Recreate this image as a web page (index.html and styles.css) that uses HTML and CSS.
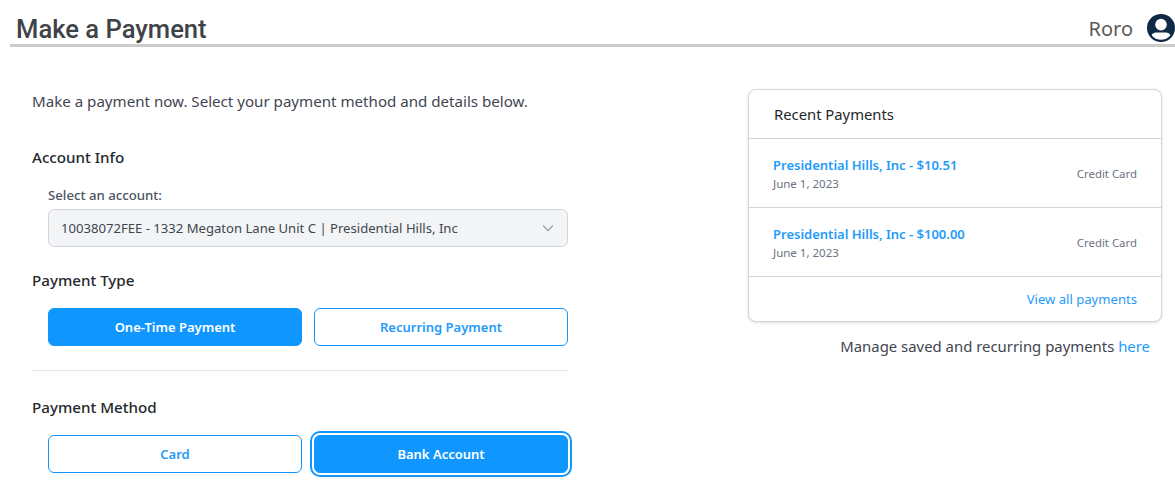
FILE: index.html
```html
<!DOCTYPE html>
<html lang="en">
<head>
<meta charset="utf-8">
<title>Make a Payment</title>
<link rel="stylesheet" href="styles.css">
</head>
<body>
<header class="topbar">
  <h1 class="title">Make a Payment</h1>
  <div class="user">
    <span class="user-name">Roro</span>
    <svg class="avatar" viewBox="0 0 28 28" aria-hidden="true">
      <circle cx="14" cy="14" r="14" fill="#0f2a47"/>
      <circle cx="14" cy="10.600" r="5.800" fill="#fff"/>
      <path d="M4.600 21.200C6 18 9.800 18.600 14 18.600s8-.6 9.400 2.600C21 24.200 17.800 25.800 14 25.800S7 24.200 4.600 21.200Z" fill="#fff"/>
    </svg>
  </div>
</header>
<main class="layout">
  <section class="form">
    <p class="intro">Make a payment now. Select your payment method and details below.</p>
    <h2 class="section-title first">Account Info</h2>
    <div class="indent">
      <label class="field-label">Select an account:</label>
      <div class="select">
        <span>10038072FEE - 1332 Megaton Lane Unit C | Presidential Hills, Inc</span>
        <svg class="chevron" viewBox="0 0 12 8" aria-hidden="true"><path d="M1 1.500l5 5 5-5" fill="none" stroke="#9ca3af" stroke-width="1.300"/></svg>
      </div>
    </div>
    <h2 class="section-title type">Payment Type</h2>
    <div class="indent buttons">
      <button class="btn solid">One-Time Payment</button>
      <button class="btn outline">Recurring Payment</button>
    </div>
    <hr class="divider">
    <h2 class="section-title method">Payment Method</h2>
    <div class="indent buttons">
      <button class="btn outline">Card</button>
      <button class="btn solid focused">Bank Account</button>
    </div>
  </section>
  <aside class="side">
    <div class="card">
      <div class="card-head">Recent Payments</div>
      <div class="row">
        <div>
          <div class="row-title">Presidential Hills, Inc - $10.51</div>
          <div class="row-date">June 1, 2023</div>
        </div>
        <span class="row-type">Credit Card</span>
      </div>
      <div class="row">
        <div>
          <div class="row-title">Presidential Hills, Inc - $100.00</div>
          <div class="row-date">June 1, 2023</div>
        </div>
        <span class="row-type">Credit Card</span>
      </div>
      <div class="card-foot"><a href="#">View all payments</a></div>
    </div>
    <p class="manage">Manage saved and recurring payments <a href="#">here</a></p>
  </aside>
</main>
</body>
</html>
```
FILE: styles.css
```css
* { box-sizing: border-box; }
html, body { margin: 0; padding: 0; }
body {
  background: #fff;
  font-family: "Noto Sans", "Open Sans", sans-serif;
  color: #1f2937;
  height: 487px;
  overflow: hidden;
}
a { color: #1f9bfb; text-decoration: none; }
.topbar {
  margin-left: 10px;
  height: 47px;
  border-bottom: 3px solid #cccccc;
  display: flex;
  justify-content: space-between;
  align-items: flex-end;
  padding: 0 0 0 6px;
}
.title {
  margin: 0;
  font-family: Roboto, sans-serif;
  font-size: 25.600px;
  font-weight: 500;
  line-height: 30px;
  height: 30px;
  color: #3f4347;
}
.user { display: flex; align-items: center; gap: 14px; height: 28px; margin-bottom: 2px; }
.user-name { font-size: 20px; color: #5a5a5a; }
.avatar { width: 28px; height: 28px; display: block; }
.layout {
  display: flex;
  padding: 42px 13px 0 32px;
  justify-content: space-between;
  align-items: flex-start;
}
.form { width: 536px; }
.intro { margin: 0; font-size: 15.120px; line-height: 24px; color: #3f4650; }
.section-title { margin: 0; font-size: 15.150px; font-weight: 500; line-height: 22px; color: #24282d; }
.section-title.first { margin-top: 33px; }
.section-title.type { margin-top: 22px; }
.section-title.method { margin-top: 25px; }
.indent { margin-left: 16px; }
.field-label { display: block; margin-top: 18px; font-size: 13.200px; font-weight: 500; line-height: 18px; color: #4b5563; }
.select {
  margin-top: 5px;
  height: 38px;
  background: #f3f4f6;
  border: 1px solid #d1d5db;
  border-radius: 6px;
  padding: 0 13px 0 12px;
  display: flex;
  align-items: center;
  justify-content: space-between;
  font-size: 13.100px;
  color: #3f4650;
}
.chevron { width: 12px; height: 8px; display: block; }
.buttons { display: grid; grid-template-columns: 254px 254px; gap: 12px; margin-top: 17px; }
.btn {
  height: 38px;
  border-radius: 6px;
  border: 1px solid #1097ff;
  font-family: inherit;
  font-size: 13px;
  font-weight: 600;
  padding: 0;
}
.btn.solid { background: #1097ff; color: #fff; }
.btn.outline { background: #fff; color: #1f9bfb; }
.btn.focused { box-shadow: 0 0 0 2px #fff, 0 0 0 4px #1097ff; }
.divider { border: 0; border-top: 1px solid #e5e7eb; margin: 24px 0 0; }
.side { width: 414px; }
.card {
  border: 1px solid #d1d5db;
  border-radius: 8px;
  box-shadow: 0 1px 3px rgba(0,0,0,.12);
  background: #fff;
}
.card-head {
  height: 49px;
  padding: 0 25px;
  display: flex;
  align-items: center;
  font-size: 14.800px;
  color: #24282d;
  border-bottom: 1px solid #d1d5db;
}
.row {
  height: 69px;
  padding: 2px 24px 0 24px;
  display: flex;
  align-items: center;
  justify-content: space-between;
  border-bottom: 1px solid #d1d5db;
}
.row-title { font-size: 13px; font-weight: 600; line-height: 19px; color: #1f9bfb; }
.row-date { font-size: 11.500px; line-height: 18px; color: #6b7280; }
.row-type { font-size: 11.400px; color: #6b7280; margin-top: -2px; }
.card-foot {
  height: 44px;
  padding: 0 24px;
  display: flex;
  align-items: center;
  justify-content: flex-end;
  font-size: 13.100px;
}
.manage { margin: 13px 12px 0 0; text-align: right; font-size: 14.900px; line-height: 22px; color: #3f4650; }
```
